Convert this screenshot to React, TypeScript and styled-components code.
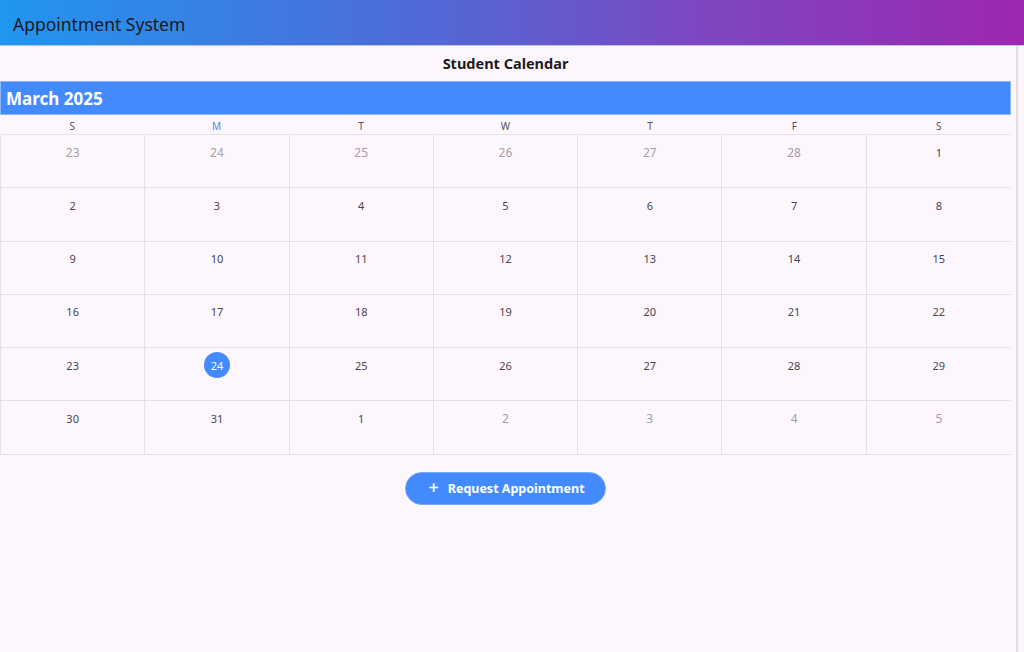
import React from 'react';
import styled, {createGlobalStyle} from "styled-components";

const GlobalStyle = createGlobalStyle`
  html, body {
    margin: 0;
    padding: 0;
    background: #fdf7fd;
    font-family: "Noto Sans", "Open Sans", sans-serif;
  }
`;

const weekdays = ["S", "M", "T", "W", "T", "F", "S"];

// [day, muted]
const weeks: [number, boolean][][] = [
    [[23, true], [24, true], [25, true], [26, true], [27, true], [28, true], [1, false]],
    [[2, false], [3, false], [4, false], [5, false], [6, false], [7, false], [8, false]],
    [[9, false], [10, false], [11, false], [12, false], [13, false], [14, false], [15, false]],
    [[16, false], [17, false], [18, false], [19, false], [20, false], [21, false], [22, false]],
    [[23, false], [24, false], [25, false], [26, false], [27, false], [28, false], [29, false]],
    [[30, false], [31, false], [1, false], [2, true], [3, true], [4, true], [5, true]],
];

const App = () => {
    return (
        <Screen>
            <GlobalStyle/>
            <Header>Appointment System</Header>
            <Body>
                <Content>
                    <Title>Student Calendar</Title>
                    <MonthBar>March 2025</MonthBar>
                    <WeekRow>
                        {weekdays.map((d, i) => (
                            <WeekDay key={i} $active={i === 1}>{d}</WeekDay>
                        ))}
                    </WeekRow>
                    <Grid>
                        {weeks.map((week, wi) =>
                            week.map(([day, muted], di) => {
                                const today = wi === 4 && di === 1;
                                return (
                                    <Cell key={wi + '-' + di} $lastCol={di === 6}>
                                        <DayNum $muted={muted} $today={today}>{day}</DayNum>
                                    </Cell>
                                );
                            })
                        )}
                    </Grid>
                    <ButtonRow>
                        <RequestButton>
                            <Plus>+</Plus>
                            Request Appointment
                        </RequestButton>
                    </ButtonRow>
                </Content>
                <ScrollTrack/>
            </Body>
        </Screen>
    );
};

const Screen = styled.div`
  display: flex;
  flex-direction: column;
  width: 100%;
  height: 100vh;
  overflow: hidden;
`;

const Header = styled.div`
  height: 46px;
  flex: none;
  display: flex;
  align-items: center;
  padding-left: 13px;
  padding-top: 2px;
  background: linear-gradient(90deg, #2196f0 0%, #4e6bd8 40%, #7f45c0 70%, #9c27b0 100%);
  color: #1c1b24;
  font-size: 17.5px;
  font-weight: 400;
  box-sizing: border-box;
  border-bottom: 1px solid #b9c2f3;
`;

const Body = styled.div`
  flex: 1;
  display: flex;
`;

const Content = styled.div`
  width: 1011px;
  display: flex;
  flex-direction: column;
`;

const ScrollTrack = styled.div`
  width: 2px;
  margin-left: 5px;
  background: #e4dde6;
`;

const Title = styled.div`
  height: 35px;
  display: flex;
  align-items: center;
  justify-content: center;
  font-size: 14.5px;
  font-weight: 700;
  color: #1d1b20;
  padding-bottom: 2px;
  box-sizing: border-box;
`;

const MonthBar = styled.div`
  height: 34px;
  background: #448aff;
  border: 1px solid #8db6fb;
  box-sizing: border-box;
  display: flex;
  align-items: center;
  padding-left: 5px;
  color: #fff;
  font-size: 17px;
  font-weight: 700;
`;

const WeekRow = styled.div`
  display: grid;
  grid-template-columns: repeat(7, 1fr);
  height: 20px;
  padding-top: 2px;
  border-bottom: 1px solid #ebe3ec;
  box-sizing: border-box;
`;

const WeekDay = styled.div<{ $active?: boolean }>`
  display: flex;
  align-items: center;
  justify-content: center;
  font-size: 10px;
  color: ${props => props.$active ? '#448aff' : '#555059'};
`;

const Grid = styled.div`
  display: grid;
  grid-template-columns: repeat(7, 1fr);
  grid-auto-rows: 53.3px;
  border-left: 1px solid #e6dfe8;
`;

const Cell = styled.div<{ $lastCol?: boolean }>`
  border-right: ${props => props.$lastCol ? 'none' : '1px solid #e6dfe8'};
  border-bottom: 1px solid #e6dfe8;
  display: flex;
  justify-content: center;
  align-items: flex-start;
  padding-top: 4px;
  box-sizing: border-box;
`;

const DayNum = styled.div<{ $muted?: boolean; $today?: boolean }>`
  width: 26px;
  height: 26px;
  border-radius: 50%;
  display: flex;
  align-items: center;
  justify-content: center;
  font-size: ${props => props.$muted ? '12px' : '11px'};
  background: ${props => props.$today ? '#448aff' : 'transparent'};
  color: ${props => props.$today ? '#fff' : props.$muted ? '#a59fa8' : '#49454f'};
`;

const ButtonRow = styled.div`
  display: flex;
  justify-content: center;
  padding-top: 17px;
`;

const RequestButton = styled.button`
  width: 201px;
  height: 33px;
  border-radius: 17px;
  border: 1px solid #7aa9fb;
  background: #448aff;
  color: #fff;
  font-family: "Noto Sans", "Open Sans", sans-serif;
  font-size: 12.5px;
  font-weight: 700;
  display: flex;
  align-items: center;
  justify-content: center;
  gap: 9px;
  padding: 0 0 0 2px;
  cursor: pointer;
`;

const Plus = styled.span`
  font-size: 18px;
  font-weight: 500;
  line-height: 1;
  margin-top: -3px;
`;

export default App;
